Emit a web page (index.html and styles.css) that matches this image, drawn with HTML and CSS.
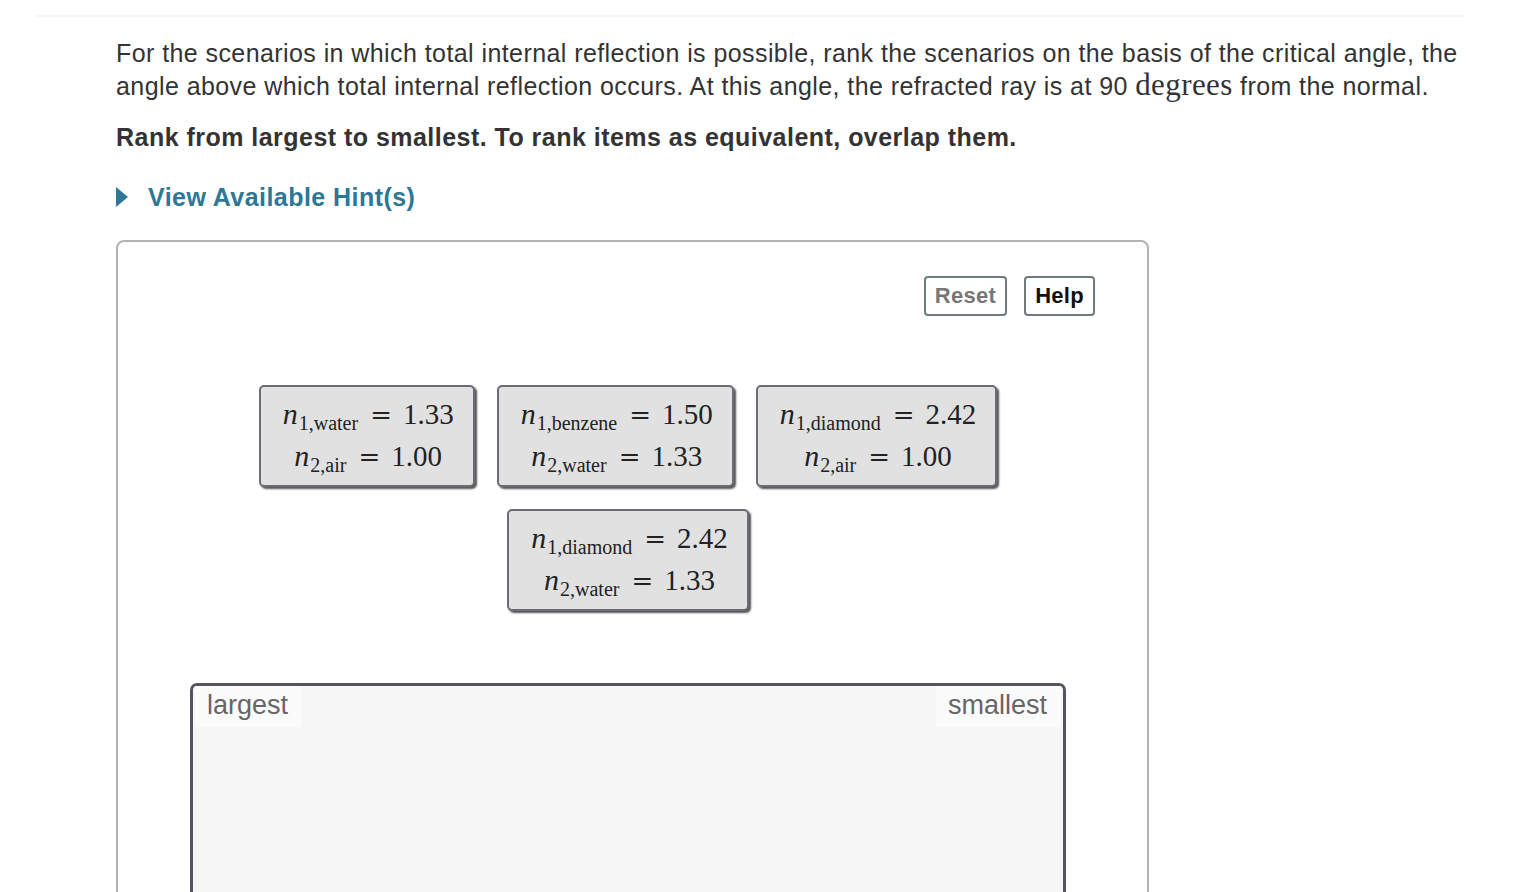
FILE: index.html
```html
<!DOCTYPE html>
<html lang="en">
  <head>
    <meta charset="UTF-8" />
    <title>Ranking Task</title>
    <link rel="stylesheet" href="styles.css">
  </head>
  <body>
    <div class="top-rule"></div>
    <div class="content">
      <p class="question">
        For the scenarios in which total internal reflection is possible, rank the scenarios on the basis of the critical angle, the angle above which total internal reflection occurs. At this angle, the refracted ray is at 90 <span class="mathword">degrees</span> from the normal.
      </p>
      <p class="instructions">Rank from largest to smallest. To rank items as equivalent, overlap them.</p>
      <div class="hint">
        <span class="hint-arrow"></span>
        <a href="#" class="hint-link">View Available Hint(s)</a>
      </div>

      <div class="task-box">
        <div class="task-buttons">
          <button class="btn btn-reset">Reset</button>
          <button class="btn btn-help">Help</button>
        </div>

        <div class="cards">
          <div class="card">
            <div class="eq"><i>n</i><sub>1,water</sub><span class="op">=</span>1.33</div>
            <div class="eq"><i>n</i><sub>2,air</sub><span class="op">=</span>1.00</div>
          </div>
          <div class="card">
            <div class="eq"><i>n</i><sub>1,benzene</sub><span class="op">=</span>1.50</div>
            <div class="eq"><i>n</i><sub>2,water</sub><span class="op">=</span>1.33</div>
          </div>
          <div class="card">
            <div class="eq"><i>n</i><sub>1,diamond</sub><span class="op">=</span>2.42</div>
            <div class="eq"><i>n</i><sub>2,air</sub><span class="op">=</span>1.00</div>
          </div>
          <div class="card">
            <div class="eq"><i>n</i><sub>1,diamond</sub><span class="op">=</span>2.42</div>
            <div class="eq"><i>n</i><sub>2,water</sub><span class="op">=</span>1.33</div>
          </div>
        </div>

        <div class="rank-area">
          <div class="rank-labels">
            <span class="rank-label">largest</span>
            <span class="rank-label">smallest</span>
          </div>
        </div>
      </div>
    </div>
  </body>
</html>
```

FILE: styles.css
```css
body {
  margin: 0;
  padding: 0;
  font-family: "Liberation Sans", Arial, sans-serif;
  color: #333;
  background: #fff;
  overflow: hidden;
}
.top-rule {
  margin: 15px 50px 0 35px;
  height: 2px;
  background: #f6f6f6;
}
.content {
  padding: 0 0 0 116px;
}
.question {
  margin: 20px 0 0;
  max-width: 1350px;
  font-size: 25px;
  letter-spacing: 0.42px;
  line-height: 32px;
}
.mathword {
  font-family: "Liberation Serif", "Times New Roman", serif;
  font-size: 31px;
  line-height: 1;
  letter-spacing: 0.4px;
}
.instructions {
  margin: 19px 0 0;
  font-size: 25px;
  letter-spacing: 0.47px;
  line-height: 32px;
  font-weight: bold;
}
.hint {
  display: flex;
  align-items: center;
  margin-top: 28px;
  height: 32px;
}
.hint-arrow {
  width: 0;
  height: 0;
  border-top: 10px solid transparent;
  border-bottom: 10px solid transparent;
  border-left: 12px solid #2d7797;
  margin-right: 20px;
}
.hint-link {
  font-size: 25px;
  letter-spacing: 0.45px;
  font-weight: bold;
  color: #2d7797;
  text-decoration: none;
}
.task-box {
  margin-top: 27px;
  width: 1033px;
  height: 700px;
  border: 2px solid #b3b3b3;
  border-radius: 8px;
  box-sizing: border-box;
  padding: 34px 52px 0 72px;
}
.task-buttons {
  display: flex;
  justify-content: flex-end;
  gap: 17px;
}
.btn {
  font-family: "Liberation Sans", Arial, sans-serif;
  font-size: 22px;
  letter-spacing: 0.3px;
  font-weight: bold;
  background: #fff;
  border: 2px solid #6f7a7e;
  border-radius: 4px;
  height: 40px;
  padding: 0 9px;
}
.btn-reset {
  color: #777;
}
.btn-help {
  color: #111;
}
.cards {
  width: 780px;
  margin: 69px 0 0 48px;
  display: flex;
  flex-wrap: wrap;
  justify-content: center;
  gap: 22px;
}
.card {
  background: #e1e1e1;
  border: 2px solid #6c6c74;
  border-radius: 5px;
  box-shadow: 2px 2px 2px #555;
  padding: 6px 19px 8px 22px;
  font-family: "Liberation Serif", "Times New Roman", serif;
  font-size: 29px;
  color: #222;
  text-align: center;
}
.eq {
  height: 42px;
  line-height: 42px;
  white-space: nowrap;
}
.eq i {
  font-size: 30px;
  margin-right: 1px;
}
.eq sub {
  font-size: 20px;
  vertical-align: -6px;
  line-height: 0;
}
.op {
  font-family: "DejaVu Serif", serif;
  font-size: 26px;
  margin: 0 11px 0 12px;
}
.rank-area {
  margin-top: 72px;
  width: 876px;
  height: 300px;
  box-sizing: border-box;
  border: 3px solid #55555f;
  border-bottom: none;
  border-radius: 7px 7px 0 0;
  background: #f6f6f6;
  padding: 0 2px;
}
.rank-labels {
  display: flex;
  justify-content: space-between;
}
.rank-label {
  background: #fbfbfb;
  color: #666;
  font-size: 27px;
  line-height: 38px;
  padding: 0 14px 3px 12px;
}
```
